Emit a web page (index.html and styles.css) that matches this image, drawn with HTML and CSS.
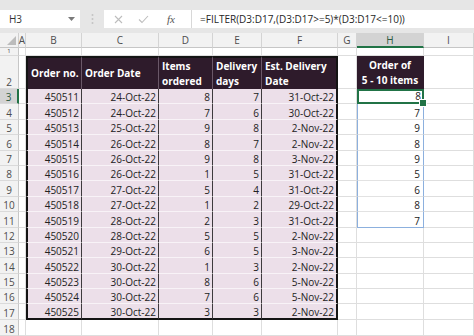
FILE: index.html
```html
<!DOCTYPE html>
<html>
<head>
<meta charset="utf-8">
<link rel="stylesheet" href="styles.css">
</head>
<body>
<div class="fbar">
  <div class="namebox"><span>H3</span><svg class="caret" width="7" height="4" viewBox="0 0 7 4"><polygon points="0,0 7,0 3.5,4" fill="#7a7a7a"/></svg></div>
  <div class="dots"><svg width="3" height="12" viewBox="0 0 3 12"><circle cx="1.5" cy="2" r="1" fill="#c4c4c4"/><circle cx="1.5" cy="6" r="1" fill="#c4c4c4"/><circle cx="1.5" cy="10" r="1" fill="#c4c4c4"/></svg></div>
  <div class="fxbox">
    <svg class="x" width="9" height="9" viewBox="0 0 9 9"><path d="M1 1L8 8M8 1L1 8" stroke="#bdbdbd" stroke-width="1.1"/></svg>
    <svg class="ck" width="11" height="9" viewBox="0 0 11 9"><path d="M1 4.5L4 7.5L10 1" stroke="#bdbdbd" stroke-width="1.1" fill="none"/></svg>
    <span class="fx">fx</span>
  </div>
  <div class="formula">=FILTER(D3:D17,(D3:D17&gt;=5)*(D3:D17&lt;=10))</div>
</div>
<div class="sheet">
  <div class="corner"><svg width="9" height="9" viewBox="0 0 9 9"><polygon points="9,0 9,9 0,9" fill="#bcbcbc"/></svg></div>
  <div class="ch">A</div><div class="ch">B</div><div class="ch">C</div><div class="ch">D</div><div class="ch">E</div><div class="ch">F</div><div class="ch">G</div><div class="ch on">H</div><div class="ch">I</div>

  <div class="rh r1">1</div><div class="c"></div><div class="c"></div><div class="c"></div><div class="c"></div><div class="c"></div><div class="c"></div><div class="c"></div><div class="c"></div><div class="c"></div>

  <div class="rh">2</div><div class="c"></div>
  <div class="th bl bt">Order no.</div><div class="th bt">Order Date</div><div class="th bt">Items<br>ordered</div><div class="th bt">Delivery<br>days</div><div class="th br bt">Est. Delivery<br>Date</div>
  <div class="c"></div><div class="th thc">Order of<br>5 - 10 items</div><div class="c"></div>

  <div class="rh on">3</div><div class="c"></div><div class="td bl">450511</div><div class="td">24-Oct-22</div><div class="td">8</div><div class="td">7</div><div class="td br">31-Oct-22</div><div class="c"></div><div class="sp sel">8</div><div class="c"></div>
  <div class="rh">4</div><div class="c"></div><div class="td bl">450512</div><div class="td">24-Oct-22</div><div class="td">7</div><div class="td">6</div><div class="td br">30-Oct-22</div><div class="c"></div><div class="sp">7</div><div class="c"></div>
  <div class="rh">5</div><div class="c"></div><div class="td bl">450513</div><div class="td">25-Oct-22</div><div class="td">9</div><div class="td">8</div><div class="td br">2-Nov-22</div><div class="c"></div><div class="sp">9</div><div class="c"></div>
  <div class="rh">6</div><div class="c"></div><div class="td bl">450514</div><div class="td">26-Oct-22</div><div class="td">8</div><div class="td">7</div><div class="td br">2-Nov-22</div><div class="c"></div><div class="sp">8</div><div class="c"></div>
  <div class="rh">7</div><div class="c"></div><div class="td bl">450515</div><div class="td">26-Oct-22</div><div class="td">9</div><div class="td">8</div><div class="td br">3-Nov-22</div><div class="c"></div><div class="sp">9</div><div class="c"></div>
  <div class="rh">8</div><div class="c"></div><div class="td bl">450516</div><div class="td">26-Oct-22</div><div class="td">1</div><div class="td">5</div><div class="td br">31-Oct-22</div><div class="c"></div><div class="sp">5</div><div class="c"></div>
  <div class="rh">9</div><div class="c"></div><div class="td bl">450517</div><div class="td">27-Oct-22</div><div class="td">5</div><div class="td">4</div><div class="td br">31-Oct-22</div><div class="c"></div><div class="sp">6</div><div class="c"></div>
  <div class="rh">10</div><div class="c"></div><div class="td bl">450518</div><div class="td">27-Oct-22</div><div class="td">1</div><div class="td">2</div><div class="td br">29-Oct-22</div><div class="c"></div><div class="sp">8</div><div class="c"></div>
  <div class="rh">11</div><div class="c"></div><div class="td bl">450519</div><div class="td">28-Oct-22</div><div class="td">2</div><div class="td">3</div><div class="td br">31-Oct-22</div><div class="c"></div><div class="sp spb">7</div><div class="c"></div>
  <div class="rh">12</div><div class="c"></div><div class="td bl">450520</div><div class="td">28-Oct-22</div><div class="td">5</div><div class="td">5</div><div class="td br">2-Nov-22</div><div class="c"></div><div class="c"></div><div class="c"></div>
  <div class="rh">13</div><div class="c"></div><div class="td bl">450521</div><div class="td">29-Oct-22</div><div class="td">6</div><div class="td">5</div><div class="td br">3-Nov-22</div><div class="c"></div><div class="c"></div><div class="c"></div>
  <div class="rh">14</div><div class="c"></div><div class="td bl">450522</div><div class="td">30-Oct-22</div><div class="td">1</div><div class="td">3</div><div class="td br">2-Nov-22</div><div class="c"></div><div class="c"></div><div class="c"></div>
  <div class="rh">15</div><div class="c"></div><div class="td bl">450523</div><div class="td">30-Oct-22</div><div class="td">8</div><div class="td">6</div><div class="td br">5-Nov-22</div><div class="c"></div><div class="c"></div><div class="c"></div>
  <div class="rh">16</div><div class="c"></div><div class="td bl">450524</div><div class="td">30-Oct-22</div><div class="td">7</div><div class="td">6</div><div class="td br">5-Nov-22</div><div class="c"></div><div class="c"></div><div class="c"></div>
  <div class="rh">17</div><div class="c"></div><div class="td bl bb">450525</div><div class="td bb">30-Oct-22</div><div class="td bb">3</div><div class="td bb">3</div><div class="td br bb">2-Nov-22</div><div class="c"></div><div class="c"></div><div class="c"></div>

  <div class="rh">18</div><div class="c"></div><div class="c"></div><div class="c"></div><div class="c"></div><div class="c"></div><div class="c"></div><div class="c"></div><div class="c"></div><div class="c"></div>
</div>
</body>
</html>
```

FILE: styles.css
```css
* { box-sizing: border-box; margin: 0; padding: 0; }
html, body { width: 474px; height: 336px; overflow: hidden; background: #fff; }
body { font-family: "Open Sans", "Noto Sans", sans-serif; }

.fbar {
  display: flex;
  height: 33px;
  padding: 10px 0 5px;
  background: #e6e6e6;
}
.namebox {
  width: 80px;
  background: #fff;
  display: flex;
  align-items: center;
  justify-content: space-between;
  padding: 0 5px 0 9px;
  font-size: 10px;
  color: #333;
}
.dots {
  width: 24px;
  display: flex;
  align-items: center;
  justify-content: center;
}
.fxbox {
  width: 87px;
  background: #fff;
  display: flex;
  align-items: center;
  padding-left: 10px;
  gap: 15px;
}
.fxbox .fx {
  font-family: "Liberation Serif", serif;
  font-style: italic;
  font-size: 11px;
  color: #555;
  margin-left: 3px;
}
.formula {
  flex: 1;
  background: #fff;
  border-left: 1px solid #d8d8d8;
  display: flex;
  align-items: center;
  padding-left: 8px;
  font-size: 10px;
  color: #262626;
  white-space: nowrap;
}

.sheet {
  display: grid;
  grid-template-columns: 19px 7px 56px 77px 54px 49px 76px 19px 67px 1fr;
  grid-template-rows: 15px 8px 33px repeat(15, 15.4px) 1fr;
  height: 303px;
  font-size: 10px;
  color: #222;
}
.sheet > div { min-width: 0; }

.corner {
  background: #f2f2f2;
  border-right: 1px solid #cfcfcf;
  border-bottom: 1px solid #c6c6c6;
  display: flex;
  align-items: flex-end;
  justify-content: flex-end;
  padding: 0 2px 2px 0;
}
.ch {
  background: #f2f2f2;
  color: #4d4d4d;
  display: flex;
  align-items: center;
  justify-content: center;
  border-right: 1px solid #d4d4d4;
  border-bottom: 1px solid #c6c6c6;
  font-size: 10px;
}
.ch.on {
  background: #d3d3d3;
  border-bottom: 2px solid #217346;
  color: #2b5a41;
}
.rh {
  background: #f2f2f2;
  color: #4d4d4d;
  display: flex;
  align-items: flex-end;
  justify-content: center;
  line-height: 12px;
  border-right: 1px solid #c6c6c6;
  border-bottom: 1px solid #dadada;
  overflow: hidden;
}
.rh.r1 {
  align-items: center;
  font-size: 6px;
  line-height: 7px;
}
.rh.on {
  background: #d3d3d3;
  border-right: 2px solid #217346;
  color: #2b5a41;
}
.c {
  border-right: 1px solid #dedede;
  border-bottom: 1px solid #dedede;
}

.th {
  background: #2e1b2b;
  color: #fff;
  font-weight: 700;
  display: flex;
  align-items: center;
  padding-left: 3px;
  line-height: 15px;
  border-right: 1px solid #6a5868;
  white-space: nowrap;
}
.th.thc {
  justify-content: center;
  text-align: center;
  padding-left: 0;
  border-right: 1px solid #2e1b2b;
}
.td {
  background: #ecdfe9;
  display: flex;
  justify-content: flex-end;
  align-items: flex-end;
  padding-right: 2px;
  line-height: 12px;
  border-right: 1px solid #3e3a3d;
  border-bottom: 1px solid #f8f3f7;
}
.bl { border-left: 2px solid #141414; }
.br { border-right: 2px solid #141414; }
.bb { border-bottom: 2px solid #141414; }
.bt { border-top: 2px solid #141414; }

.sp {
  background: #fff;
  display: flex;
  justify-content: flex-end;
  align-items: flex-end;
  padding-right: 3px;
  line-height: 12px;
  border-left: 1px solid #8cb0de;
  border-right: 1px solid #8cb0de;
  border-bottom: 1px solid #e2e2e2;
}
.spb { border-bottom: 1px solid #8cb0de; }
.sel {
  position: relative;
  z-index: 1;
  border: none;
  box-shadow: inset 0 0 0 2px #217346;
  padding: 0 3px 2px 0;
}
.sel::after {
  content: "";
  position: absolute;
  right: -3px;
  bottom: -3px;
  width: 6px;
  height: 6px;
  background: #217346;
  border: 1px solid #fff;
}
```
